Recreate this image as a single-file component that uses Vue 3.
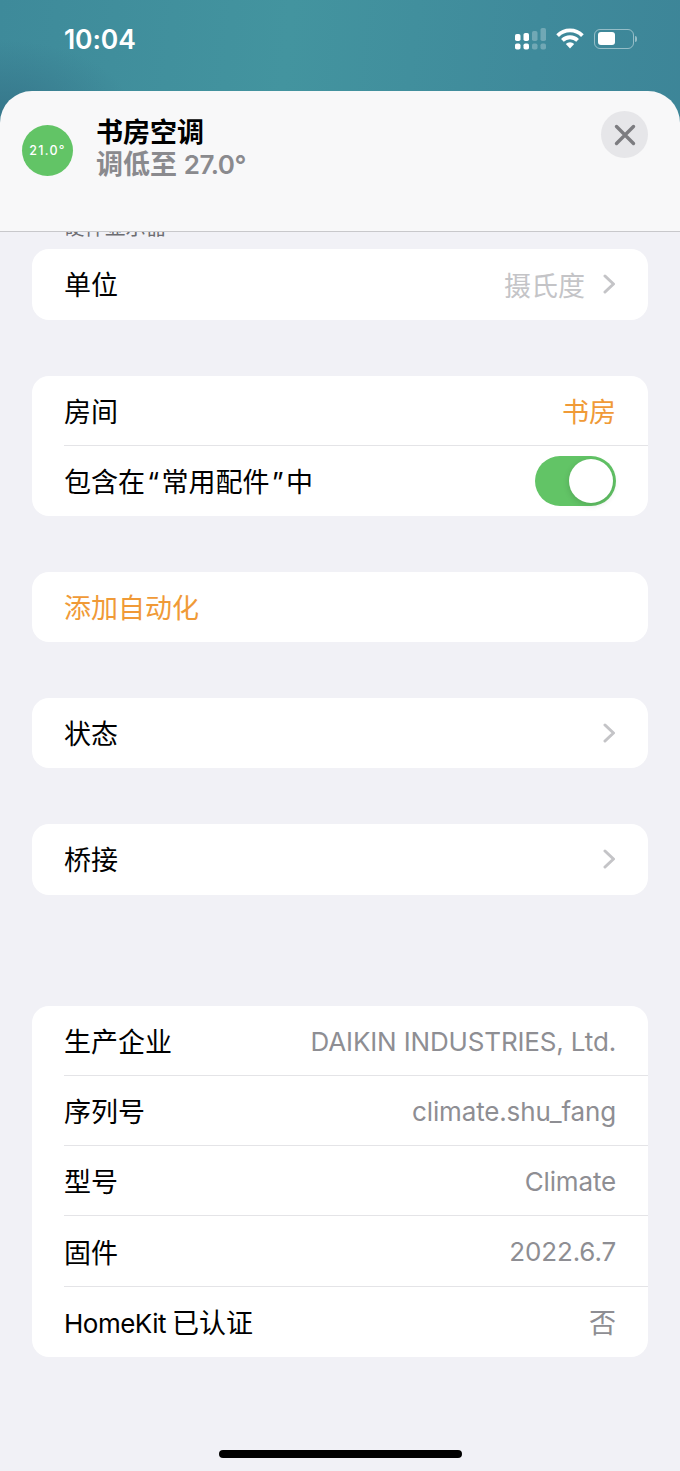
<script setup>
const infoRows = [
  { label: '生产企业', value: 'DAIKIN INDUSTRIES, Ltd.', latin: true },
  { label: '序列号', value: 'climate.shu_fang', latin: true },
  { label: '型号', value: 'Climate', latin: true },
  { label: '固件', value: '2022.6.7', latin: true },
  { label: '已认证', brand: 'HomeKit', value: '否', latin: false },
]
const navRows = ['状态', '桥接']
</script>

<template>
  <div class="screen">
    <div class="status-bar">
      <span class="clock">10:04</span>
      <div class="status-icons">
        <svg class="signal" width="32" height="22" viewBox="0 0 32 22">
          <g fill="#fff">
            <rect x="0" y="6" width="5.500" height="7" rx="1.800" />
            <rect x="8.500" y="5" width="5.500" height="8" rx="1.800" />
            <rect x="0" y="15.500" width="5.500" height="6" rx="1.800" />
            <rect x="8.500" y="15.500" width="5.500" height="6" rx="1.800" />
          </g>
          <g fill="#fff" opacity="0.26">
            <rect x="17" y="3" width="5.500" height="10" rx="1.800" />
            <rect x="25.500" y="0" width="5.500" height="13" rx="1.800" />
            <rect x="17" y="15.500" width="5.500" height="6" rx="1.800" />
            <rect x="25.500" y="15.500" width="5.500" height="6" rx="1.800" />
          </g>
        </svg>
        <svg class="wifi" width="28" height="21" viewBox="0 0 28 21">
          <g fill="none" stroke="#fff" stroke-width="3.800">
            <path d="M1.600 7.600a17.500 17.500 0 0 1 24.800 0" />
            <path d="M6.400 12.400a10.800 10.800 0 0 1 15.200 0" />
          </g>
          <path d="M9.800 16a6 6 0 0 1 8.400 0L14 20.500z" fill="#fff" />
        </svg>
        <div class="battery">
          <div class="battery-shell"><div class="battery-fill"></div></div>
          <div class="battery-cap"></div>
        </div>
      </div>
    </div>

    <header class="sheet-head">
      <div class="temp-badge">21.0°</div>
      <div class="sheet-title">
        <div class="name">书房空调</div>
        <div class="sub">调低至 <span class="latin">27.0°</span></div>
      </div>
      <button class="close" aria-label="关闭">
        <svg width="22" height="22" viewBox="0 0 22 22">
          <path d="M2.500 2.500l17 17M19.500 2.500l-17 17" stroke="#7c7c80" stroke-width="3.400" stroke-linecap="round" />
        </svg>
      </button>
    </header>

    <main class="content">
      <div class="section-label">硬件显示器</div>

      <section class="card first">
        <div class="row">
          <span>单位</span>
          <span class="value light">摄氏度</span>
          <svg class="chevron" width="13" height="20" viewBox="0 0 13 20">
            <path d="M2 2l8.500 8L2 18" fill="none" stroke="#c4c4c7" stroke-width="3" stroke-linecap="round" stroke-linejoin="round" />
          </svg>
        </div>
      </section>

      <section class="card">
        <div class="row">
          <span>房间</span>
          <span class="value accent">书房</span>
        </div>
        <div class="row">
          <span>包含在<span class="quote">“</span>常用配件<span class="quote">”</span>中</span>
          <div class="switch"><div class="knob"></div></div>
        </div>
      </section>

      <section class="card">
        <div class="row"><span class="accent">添加自动化</span></div>
      </section>

      <section v-for="item in navRows" :key="item" class="card">
        <div class="row">
          <span>{{ item }}</span>
          <svg class="chevron push" width="13" height="20" viewBox="0 0 13 20">
            <path d="M2 2l8.500 8L2 18" fill="none" stroke="#c4c4c7" stroke-width="3" stroke-linecap="round" stroke-linejoin="round" />
          </svg>
        </div>
      </section>

      <section class="card info">
        <div v-for="item in infoRows" :key="item.label" class="row">
          <span>
            <span v-if="item.brand" class="latin brand">{{ item.brand }}</span>{{ item.label }}
          </span>
          <span class="value muted" :class="{ latin: item.latin }">{{ item.value }}</span>
        </div>
      </section>
    </main>

    <div class="home-bar"></div>
  </div>
</template>

<style>
body {
  margin: 0;
  background: #f1f1f6;
}
</style>

<style scoped>
.screen {
  position: relative;
  display: flex;
  flex-direction: column;
  width: 680px;
  height: 1471px;
  overflow: hidden;
  background:
    linear-gradient(180deg, transparent 130px, #f1f1f6 130px),
    radial-gradient(130px 70px at 0 110px, #37788c 0%, rgba(55, 120, 140, 0) 100%),
    linear-gradient(96deg, #3e8a9a 0%, #43949f 35%, #3f8a9b 65%, #3b8195 100%);
  font-family: Inter, "Noto Sans CJK SC", sans-serif;
  color: #000;
}

/* status bar */
.status-bar {
  display: flex;
  align-items: center;
  justify-content: space-between;
  height: 91px;
  padding: 0 43px 14px 64px;
  box-sizing: border-box;
  flex: none;
}
.clock {
  color: #fff;
  font-size: 26.500px;
  font-weight: 600;
  letter-spacing: -0.1px;
}
.status-icons {
  display: flex;
  align-items: center;
}
.signal {
  margin-right: 9px;
}
.wifi {
  margin-right: 10px;
}
.battery {
  display: flex;
  align-items: center;
}
.battery-shell {
  width: 40px;
  height: 20px;
  padding: 2.500px;
  box-sizing: border-box;
  border: 1.500px solid rgba(255, 255, 255, 0.45);
  border-radius: 6px;
}
.battery-fill {
  width: 17px;
  height: 100%;
  background: #fff;
  border-radius: 3px;
}
.battery-cap {
  width: 2px;
  height: 6px;
  margin-left: 1px;
  background: rgba(255, 255, 255, 0.45);
  border-radius: 0 2px 2px 0;
}

/* sheet header */
.sheet-head {
  display: flex;
  align-items: flex-start;
  flex: none;
  height: 141px;
  box-sizing: border-box;
  padding: 20px 32px 0 22px;
  background: #f8f8f9;
  border-radius: 32px 32px 0 0;
  border-bottom: 1px solid #c8c8cb;
}
.temp-badge {
  flex: none;
  width: 51px;
  height: 51px;
  margin-top: 14px;
  border-radius: 50%;
  background: #62c466;
  color: #fff;
  font-size: 12.500px;
  font-weight: 500;
  letter-spacing: 1.300px;
  line-height: 51px;
  text-align: center;
}
.sheet-title {
  flex: 1;
  margin-left: 23px;
  font-size: 27px;
  font-weight: 700;
  line-height: 32px;
}
.sheet-title .name {
  margin-top: 6px;
  font-weight: 600;
}
.sheet-title .sub {
  color: #8a8a8e;
  font-weight: 600;
}
.sub .latin {
  letter-spacing: -0.5px;
}
.close {
  display: flex;
  align-items: center;
  justify-content: center;
  flex: none;
  width: 47px;
  height: 47px;
  padding: 0;
  border: none;
  border-radius: 50%;
  background: #e6e6e9;
}

/* settings list */
.content {
  flex: 1;
  overflow: hidden;
  background: #f1f1f6;
}
.section-label {
  height: 11px;
  margin-top: -19px;
  margin-left: 64px;
  color: #6d6d72;
  font-size: 20.500px;
  line-height: 30px;
}
.card {
  margin: 56px 32px 0;
  background: #fff;
  border-radius: 17px;
  font-size: 27px;
}
.card.first {
  margin-top: 25.400px;
}
.card.info {
  margin-top: 111.400px;
}
.row {
  display: flex;
  align-items: center;
  height: 70.200px;
  margin-left: 32px;
  padding-right: 32px;
}
.row > span:first-child {
  margin-top: -1px;
}
.row + .row {
  box-shadow: 0 -1px 0 #e4e4e7;
}
.value {
  margin-left: auto;
}
.latin {
  font-size: 26px;
  letter-spacing: -0.15px;
}
.brand {
  margin-right: 6px;
  letter-spacing: -0.5px;
}
.quote {
  display: inline-block;
  width: 16.500px;
  text-align: center;
}
.light {
  color: #c4c4c7;
}
.muted {
  color: #8e8e93;
}
.accent {
  color: #f09a37;
}
.chevron {
  flex: none;
  margin-left: 18px;
}
.chevron.push {
  margin-left: auto;
}
.switch {
  display: flex;
  align-items: center;
  justify-content: flex-end;
  width: 81px;
  height: 50px;
  margin-left: auto;
  padding: 3px;
  box-sizing: border-box;
  border-radius: 25px;
  background: #62c466;
}
.knob {
  width: 44px;
  height: 44px;
  border-radius: 50%;
  background: #fff;
  box-shadow: 0 2px 6px rgba(0, 0, 0, 0.15);
}

.home-bar {
  position: absolute;
  left: 219px;
  bottom: 13px;
  width: 243px;
  height: 8px;
  border-radius: 4px;
  background: #000;
}
</style>
